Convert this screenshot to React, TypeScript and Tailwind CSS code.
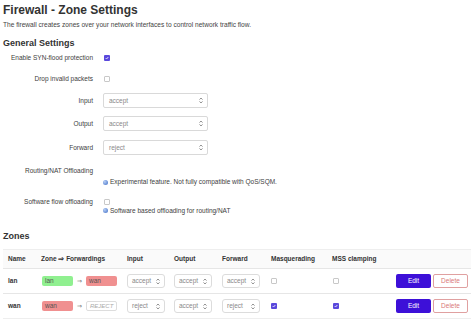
import React from "react";

const Arrows = () => (
  <svg width="4" height="7" viewBox="0 0 4 7" className="shrink-0">
    <path d="M0.5 2.6 L2 1 L3.5 2.6" fill="none" stroke="#777" strokeWidth="0.8" />
    <path d="M0.5 4.4 L2 6 L3.5 4.4" fill="none" stroke="#777" strokeWidth="0.8" />
  </svg>
);

const Select = ({ value, wide }: { value: string; wide?: boolean }) => (
  <div
    className={
      wide
        ? "flex h-[15px] w-[105px] items-center justify-between rounded-[2px] border border-[#d9d9d9] bg-white pl-[5px] pr-[4px] text-[6.5px] text-[#888]"
        : "flex h-[14px] w-[38px] items-center justify-between rounded-[3px] border border-[#dcdcdc] bg-white pl-[4px] pr-[4px] text-[6.5px] text-[#888]"
    }
  >
    <span>{value}</span>
    <Arrows />
  </div>
);

const Check = ({ checked }: { checked?: boolean }) =>
  checked ? (
    <div className="flex h-[6px] w-[6px] items-center justify-center rounded-[1px] bg-[#5a48dc]">
      <svg width="4" height="4" viewBox="0 0 4 4">
        <path d="M0.7 2.1 L1.6 3 L3.3 1" fill="none" stroke="white" strokeWidth="0.8" />
      </svg>
    </div>
  ) : (
    <div className="h-[6px] w-[6px] rounded-[1px] border border-[#c8c8c8] bg-white" />
  );

const Info = () => (
  <div className="h-[5px] w-[5px] shrink-0 rounded-full bg-[radial-gradient(circle_at_35%_35%,#b8cff5,#3c6cc6)]" />
);

const Row = ({
  label,
  h,
  mt,
  children,
}: {
  label: string;
  h: string;
  mt: string;
  children?: React.ReactNode;
}) => (
  <div className={`flex items-center ${h} ${mt}`}>
    <div className="w-[90px] text-right text-[6.5px] text-[#404040]">{label}</div>
    <div className="ml-[10px] flex items-center">{children}</div>
  </div>
);

const Tag = ({ name, color }: { name: string; color: string }) => (
  <div
    className={`flex h-[10px] w-[31px] items-center rounded-[2px] pl-[3px] text-[6.5px] text-[#555] ${color}`}
  >
    {name}
  </div>
);

const Buttons = () => (
  <div className="flex justify-end gap-[2px] pr-[3px]">
    <div className="flex h-[14px] w-[35px] items-center justify-center rounded-[2px] bg-[#3d10d8] text-white">
      Edit
    </div>
    <div className="flex h-[14px] w-[35px] items-center justify-center rounded-[2px] border border-[#e0a0a0] bg-white text-[#d97878]">
      Delete
    </div>
  </div>
);

export default function App() {
  return (
    <div className="h-[320px] w-[474px] overflow-hidden bg-white px-[3px] font-['Liberation_Sans',Arial,sans-serif] text-[#333]">
      <div className="pt-[2px] text-[12px] font-bold leading-[16px] text-[#333]">
        Firewall - Zone Settings
      </div>
      <div className="mt-[2px] whitespace-nowrap text-[6.6px] leading-[10px] text-[#444]">
        The firewall creates zones over your network interfaces to control network traffic flow.
      </div>
      <div className="mt-[7px] text-[9px] font-bold leading-[12px] text-[#333]">General Settings</div>

      <Row label="Enable SYN-flood protection" h="h-[12px]" mt="mt-[3px]">
        <div className="ml-[1px]">
          <Check checked />
        </div>
      </Row>
      <Row label="Drop invalid packets" h="h-[12px]" mt="mt-[9px]">
        <div className="ml-[1px]">
          <Check />
        </div>
      </Row>
      <Row label="Input" h="h-[15px]" mt="mt-[8px]">
        <Select value="accept" wide />
      </Row>
      <Row label="Output" h="h-[15px]" mt="mt-[8px]">
        <Select value="accept" wide />
      </Row>
      <Row label="Forward" h="h-[15px]" mt="mt-[9px]">
        <Select value="reject" wide />
      </Row>

      <Row label="Routing/NAT Offloading" h="h-[12px]" mt="mt-[10px]" />
      <div className="ml-[100px] flex h-[10px] items-center gap-[2px] text-[6.5px] text-[#404040]">
        <Info />
        <span>Experimental feature. Not fully compatible with QoS/SQM.</span>
      </div>

      <Row label="Software flow offloading" h="h-[12px]" mt="mt-[9px]">
        <div className="ml-[1px]">
          <Check />
        </div>
      </Row>
      <div className="-mt-[2px] ml-[100px] flex h-[9px] items-center gap-[2px] text-[6.5px] text-[#404040]">
        <Info />
        <span>Software based offloading for routing/NAT</span>
      </div>

      <div className="mt-[15px] text-[9px] font-bold leading-[12px] text-[#333]">Zones</div>

      <div className="mt-[7px] w-[468px] border-t border-[#eee] text-[6.5px] text-[#404040]">
        <div className="grid h-[19px] grid-cols-[33px_86px_47px_48px_49px_61px_60px_1fr] items-center border-b border-[#e6e6e6] bg-[#fafafa] font-bold text-[#333]">
          <div className="pl-[5px]">Name</div>
          <div className="pl-[5px]">Zone ⇒ Forwardings</div>
          <div className="pl-[5px]">Input</div>
          <div className="pl-[5px]">Output</div>
          <div className="pl-[5px]">Forward</div>
          <div className="pl-[5px]">Masquerading</div>
          <div className="pl-[5px]">MSS clamping</div>
          <div />
        </div>

        <div className="grid h-[25px] grid-cols-[33px_86px_47px_48px_49px_61px_60px_1fr] items-center border-b border-[#e6e6e6]">
          <div className="pl-[5px] font-bold text-[#333]">lan</div>
          <div className="flex items-center pl-[6px]">
            <Tag name="lan" color="bg-[#90f090]" />
            <span className="mx-[4px] text-[6px] text-[#666]">⇒</span>
            <Tag name="wan" color="bg-[#f09090]" />
          </div>
          <div className="pl-[5px]">
            <Select value="accept" />
          </div>
          <div className="pl-[5px]">
            <Select value="accept" />
          </div>
          <div className="pl-[5px]">
            <Select value="accept" />
          </div>
          <div className="pl-[5px]">
            <Check />
          </div>
          <div className="pl-[6px]">
            <Check />
          </div>
          <Buttons />
        </div>

        <div className="grid h-[25px] grid-cols-[33px_86px_47px_48px_49px_61px_60px_1fr] items-center border-b border-[#eee]">
          <div className="pl-[5px] font-bold text-[#333]">wan</div>
          <div className="flex items-center pl-[6px]">
            <Tag name="wan" color="bg-[#f09090]" />
            <span className="mx-[4px] text-[6px] text-[#666]">⇒</span>
            <div className="flex h-[10px] w-[31px] items-center rounded-[2px] border border-[#ddd] pl-[3px] text-[6px] italic text-[#aaa]">
              REJECT
            </div>
          </div>
          <div className="pl-[5px]">
            <Select value="reject" />
          </div>
          <div className="pl-[5px]">
            <Select value="accept" />
          </div>
          <div className="pl-[5px]">
            <Select value="reject" />
          </div>
          <div className="pl-[5px]">
            <Check checked />
          </div>
          <div className="pl-[6px]">
            <Check checked />
          </div>
          <Buttons />
        </div>
      </div>
    </div>
  );
}
